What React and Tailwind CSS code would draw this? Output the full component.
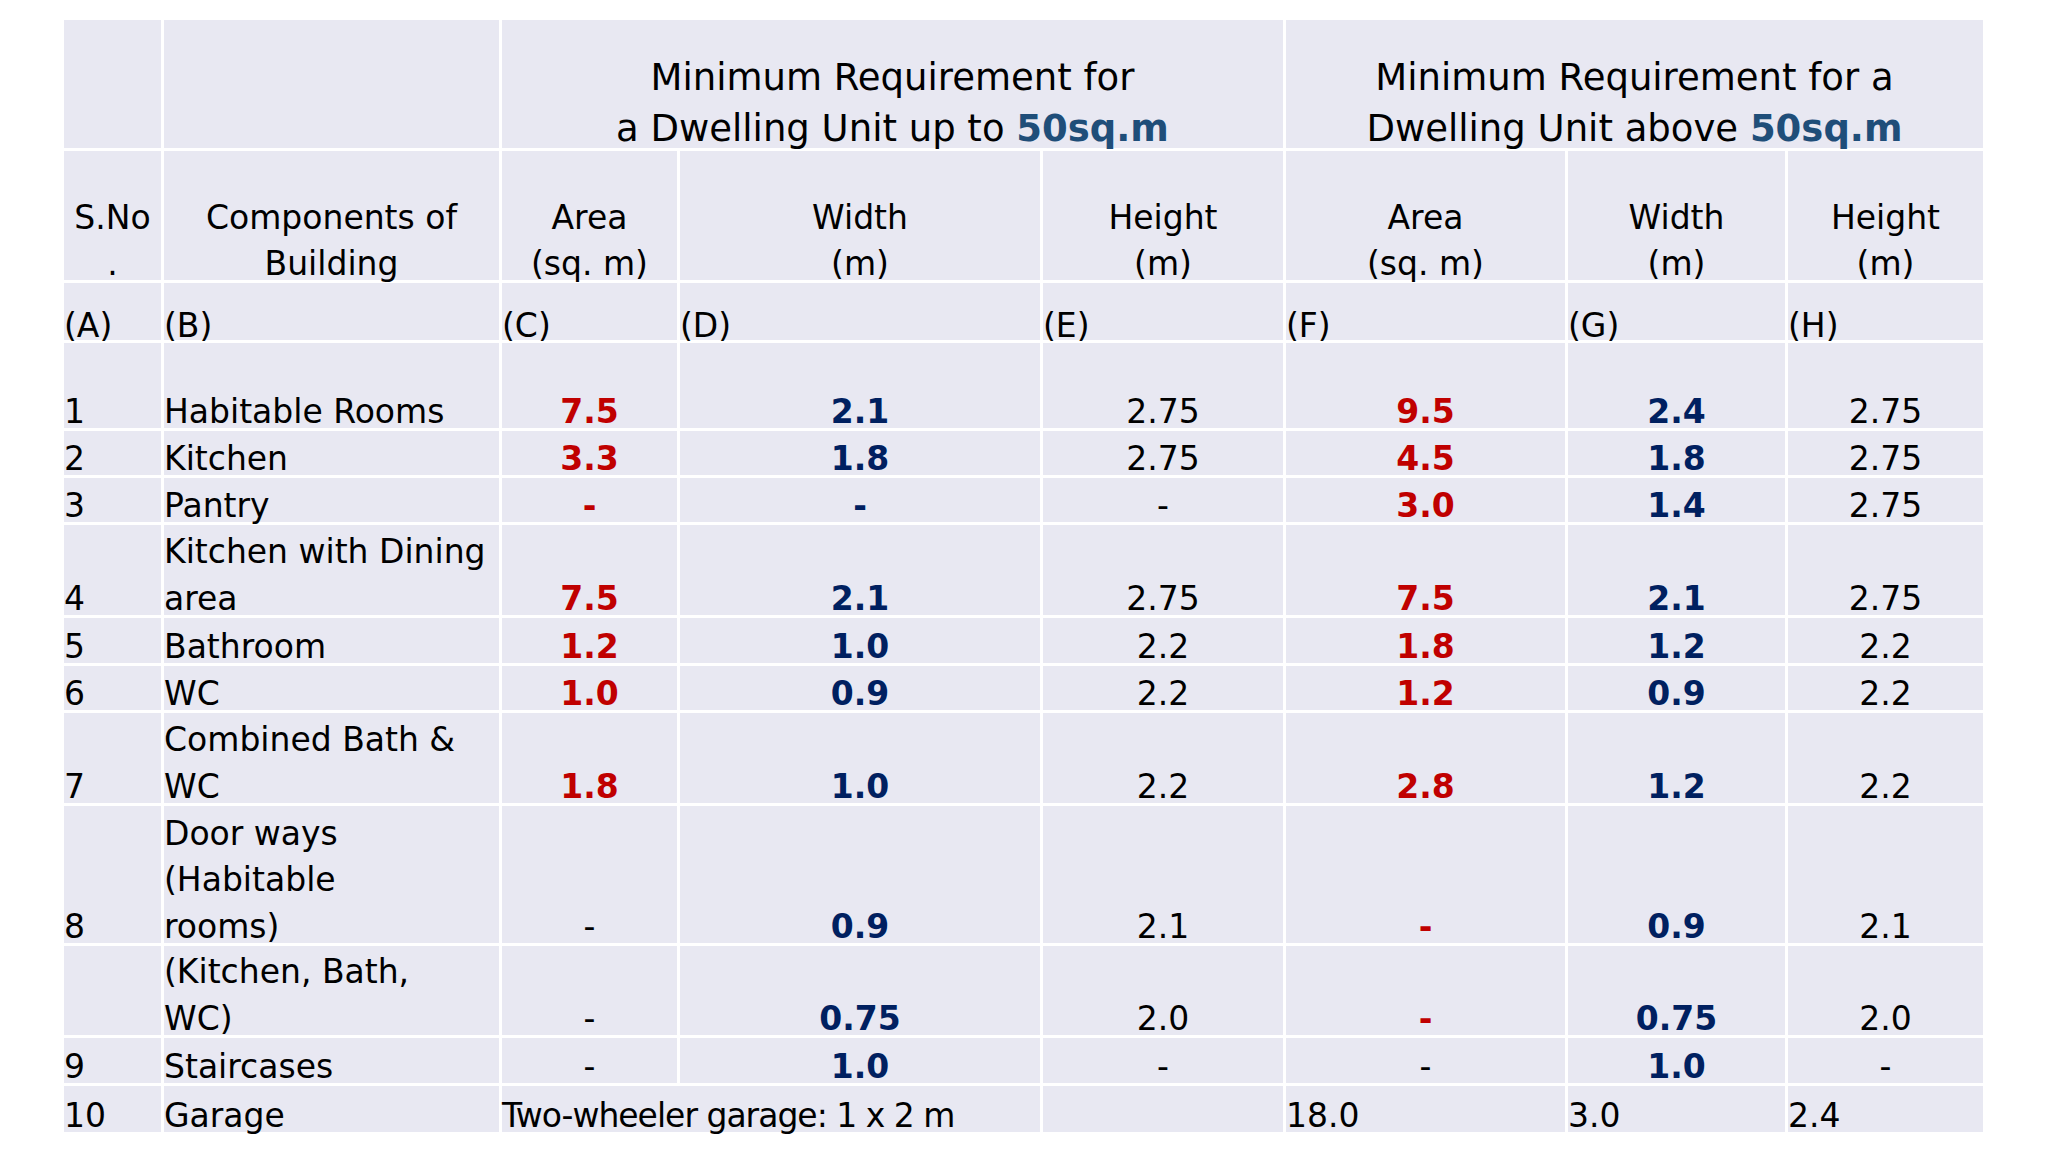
import React from 'react'

const tone = {
  r: 'font-bold text-[#c00000]',
  b: 'font-bold text-[#002060]',
  n: '',
}

const Cell = ({ children, className = '', center = false, shift = '-mb-[7px]' }) => (
  <div
    className={`flex items-end bg-[#e8e8f2] ${center ? 'justify-center text-center' : ''} ${className}`}
  >
    <div className={shift}>{children}</div>
  </div>
)

const rows = [
  { no: '1', name: ['Habitable Rooms'], vals: [['7.5', 'r'], ['2.1', 'b'], ['2.75', 'n'], ['9.5', 'r'], ['2.4', 'b'], ['2.75', 'n']] },
  { no: '2', name: ['Kitchen'], vals: [['3.3', 'r'], ['1.8', 'b'], ['2.75', 'n'], ['4.5', 'r'], ['1.8', 'b'], ['2.75', 'n']] },
  { no: '3', name: ['Pantry'], vals: [['-', 'r'], ['-', 'b'], ['-', 'n'], ['3.0', 'r'], ['1.4', 'b'], ['2.75', 'n']] },
  { no: '4', name: ['Kitchen with Dining', 'area'], vals: [['7.5', 'r'], ['2.1', 'b'], ['2.75', 'n'], ['7.5', 'r'], ['2.1', 'b'], ['2.75', 'n']] },
  { no: '5', name: ['Bathroom'], vals: [['1.2', 'r'], ['1.0', 'b'], ['2.2', 'n'], ['1.8', 'r'], ['1.2', 'b'], ['2.2', 'n']] },
  { no: '6', name: ['WC'], vals: [['1.0', 'r'], ['0.9', 'b'], ['2.2', 'n'], ['1.2', 'r'], ['0.9', 'b'], ['2.2', 'n']] },
  { no: '7', name: ['Combined Bath &', 'WC'], vals: [['1.8', 'r'], ['1.0', 'b'], ['2.2', 'n'], ['2.8', 'r'], ['1.2', 'b'], ['2.2', 'n']] },
  { no: '8', name: ['Door ways', '(Habitable', 'rooms)'], vals: [['-', 'n'], ['0.9', 'b'], ['2.1', 'n'], ['-', 'r'], ['0.9', 'b'], ['2.1', 'n']] },
  { no: '', name: ['(Kitchen, Bath,', 'WC)'], vals: [['-', 'n'], ['0.75', 'b'], ['2.0', 'n'], ['-', 'r'], ['0.75', 'b'], ['2.0', 'n']] },
  { no: '9', name: ['Staircases'], vals: [['-', 'n'], ['1.0', 'b'], ['-', 'n'], ['-', 'n'], ['1.0', 'b'], ['-', 'n']] },
]

const Lines = ({ lines }) =>
  lines.map((l, i) => (
    <React.Fragment key={i}>
      {i > 0 && <br />}
      {l}
    </React.Fragment>
  ))

export default function App() {
  return (
    <div className="min-h-screen bg-white pl-[64px] pt-[20px] font-['DejaVu_Sans',sans-serif] text-[33px] leading-[46.5px] text-black">
      <div className="grid w-[1919px] grid-cols-[97px_335px_175px_360px_240px_279px_217px_195px] grid-rows-[128px_129px_57px_85px_44px_44px_90px_45px_44px_90px_137px_89px_45px_46px] gap-[3px] bg-white">
        {/* group headings */}
        <Cell />
        <Cell />
        <Cell center className="col-span-3 text-[37px] leading-[51px]" shift="-mb-[6px]">
          Minimum Requirement for
          <br />
          a Dwelling Unit up to <span className="font-bold text-[#1f4e79]">50sq.m</span>
        </Cell>
        <Cell center className="col-span-3 text-[37px] leading-[51px]" shift="-mb-[6px]">
          Minimum Requirement for a
          <br />
          Dwelling Unit above <span className="font-bold text-[#1f4e79]">50sq.m</span>
        </Cell>

        {/* column headings */}
        <Cell center className="leading-[46px]">S.No<br />.</Cell>
        <Cell center className="leading-[46px]">Components of<br />Building</Cell>
        <Cell center className="leading-[46px]">Area<br />(sq. m)</Cell>
        <Cell center className="leading-[46px]">Width<br />(m)</Cell>
        <Cell center className="leading-[46px]">Height<br />(m)</Cell>
        <Cell center className="leading-[46px]">Area<br />(sq. m)</Cell>
        <Cell center className="leading-[46px]">Width<br />(m)</Cell>
        <Cell center className="leading-[46px]">Height<br />(m)</Cell>

        {/* letters */}
        {['(A)', '(B)', '(C)', '(D)', '(E)', '(F)', '(G)', '(H)'].map((t) => (
          <Cell key={t} shift="-mb-[9px]">{t}</Cell>
        ))}

        {rows.map((r, i) => (
          <React.Fragment key={i}>
            <Cell>{r.no}</Cell>
            <Cell className="whitespace-nowrap">
              <Lines lines={r.name} />
            </Cell>
            {r.vals.map(([v, c], j) => (
              <Cell key={j} center>
                <span className={tone[c]}>{v}</span>
              </Cell>
            ))}
          </React.Fragment>
        ))}

        {/* garage */}
        <Cell>10</Cell>
        <Cell>Garage</Cell>
        <Cell className="col-span-2 whitespace-nowrap tracking-[-1px]">Two-wheeler garage: 1 x 2 m</Cell>
        <Cell />
        <Cell>18.0</Cell>
        <Cell>3.0</Cell>
        <Cell>2.4</Cell>
      </div>
    </div>
  )
}
